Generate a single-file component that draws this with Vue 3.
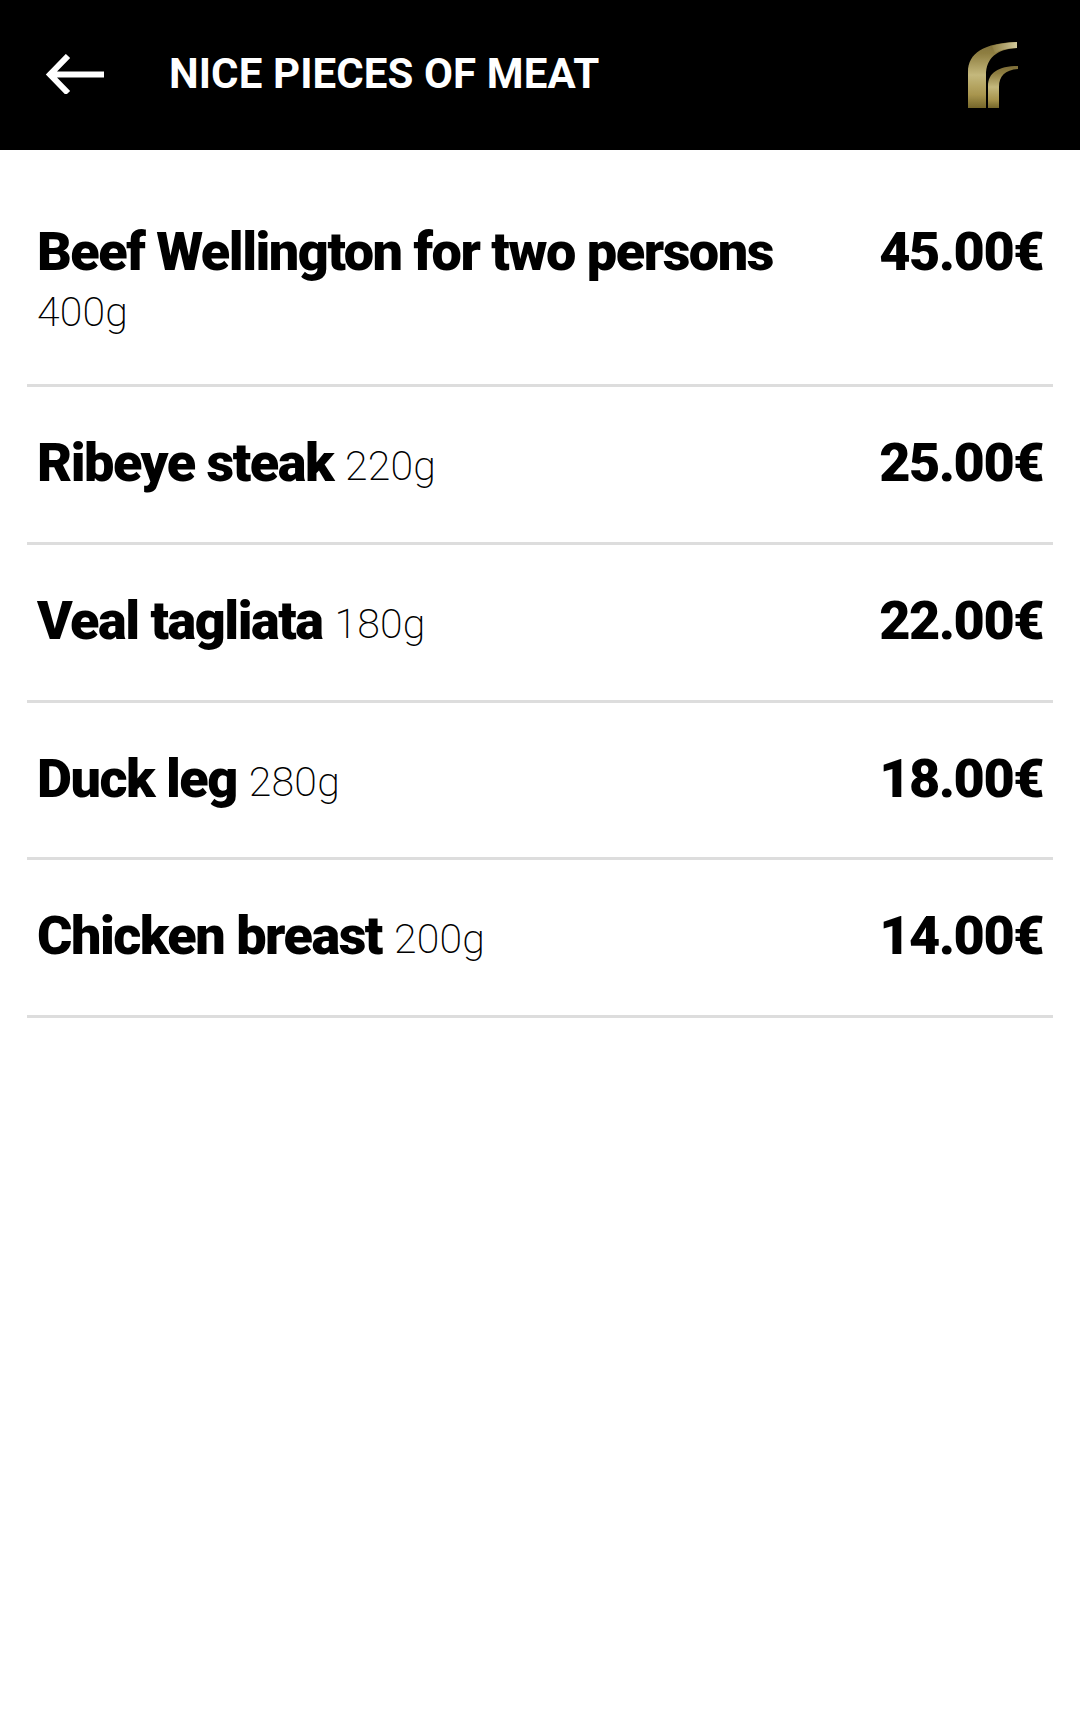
<script setup>
const items = [
  { name: 'Ribeye steak', weight: '220g', price: '25.00€' },
  { name: 'Veal tagliata', weight: '180g', price: '22.00€' },
  { name: 'Duck leg', weight: '280g', price: '18.00€' },
  { name: 'Chicken breast', weight: '200g', price: '14.00€' },
]
</script>

<template>
  <div class="page">
    <header class="bar">
      <svg class="back" width="62" height="40" viewBox="0 0 62 40">
        <path d="M60 20.5H6M24 2L6 20.5L24 39" fill="none" stroke="#fff" stroke-width="6" />
      </svg>
      <h1 class="title">NICE PIECES OF MEAT</h1>
      <svg class="logo" width="54" height="70" viewBox="0 0 54 70">
        <defs>
          <linearGradient id="gold" x1="0" y1="0" x2="0" y2="1">
            <stop offset="0" stop-color="#7d6d38" />
            <stop offset="0.18" stop-color="#8f7f42" />
            <stop offset="0.5" stop-color="#c4b87c" />
            <stop offset="0.8" stop-color="#a8954e" />
            <stop offset="1" stop-color="#75662a" />
          </linearGradient>
          <linearGradient id="tip" x1="0" y1="0" x2="1" y2="0">
            <stop offset="0" stop-color="#8f7f42" />
            <stop offset="1" stop-color="#d2c99c" />
          </linearGradient>
          <filter id="soft" x="-10%" y="-10%" width="120%" height="120%">
            <feGaussianBlur stdDeviation="0.6" />
          </filter>
        </defs>
        <g filter="url(#soft)">
          <path d="M2 68V32C2 13 18 3 51 2V8C31 9 20 18 20 35V68Z" fill="url(#gold)" />
          <path d="M22 68V46C22 33 32 26 52 26V29C39 30 33 36 33 47V68Z" fill="url(#gold)" />
          <path d="M26 6C32 4 40 2.500 51 2V8C41 8.500 34 10 29 13Z" fill="url(#tip)" />
        </g>
      </svg>
    </header>
    <main class="list">
      <section class="row first">
        <div class="text">
          <div class="name">Beef Wellington for two persons</div>
          <div class="weight">400g</div>
        </div>
        <div class="price">45.00€</div>
      </section>
      <section v-for="item in items" :key="item.name" class="row">
        <div class="text">
          <span class="name">{{ item.name }}</span>
          <span class="weight inline">{{ item.weight }}</span>
        </div>
        <div class="price">{{ item.price }}</div>
      </section>
    </main>
  </div>
</template>

<style>
html, body { margin: 0; background: #fff; }
</style>

<style scoped>
.page {
  width: 1080px;
  height: 1733px;
  background: #fff;
  font-family: Roboto, sans-serif;
  color: #000;
  overflow: hidden;
}
.bar {
  height: 150px;
  background: #000;
  display: flex;
  align-items: center;
  padding-left: 44px;
  padding-right: 60px;
}
.back { flex: none; margin-right: 63px; margin-top: -2px; }
.title {
  margin: -4px 0 0;
  flex: 1;
  font-size: 42px;
  font-weight: 700;
  letter-spacing: 0.1px;
  color: #fff;
}
.logo { flex: none; }
.list { padding: 0 27px; }
.row {
  display: flex;
  justify-content: space-between;
  align-items: flex-start;
  padding: 0 10px;
  height: 154.75px;
  border-bottom: 3px solid #ddd;
  line-height: 60px;
}
.row .text, .row .price { margin-top: 46px; }
.row.first { height: 234px; }
.row.first .text, .row.first .price { margin-top: 72px; }
.name { font-size: 54px; font-weight: 900; letter-spacing: -1.5px; }
.weight { font-size: 41px; font-weight: 200; letter-spacing: 0.2px; }
.inline { margin-left: 12px; vertical-align: 1px; }
.price { font-size: 54px; font-weight: 900; letter-spacing: -1.5px; }
.first .weight { line-height: 60px; }
</style>
